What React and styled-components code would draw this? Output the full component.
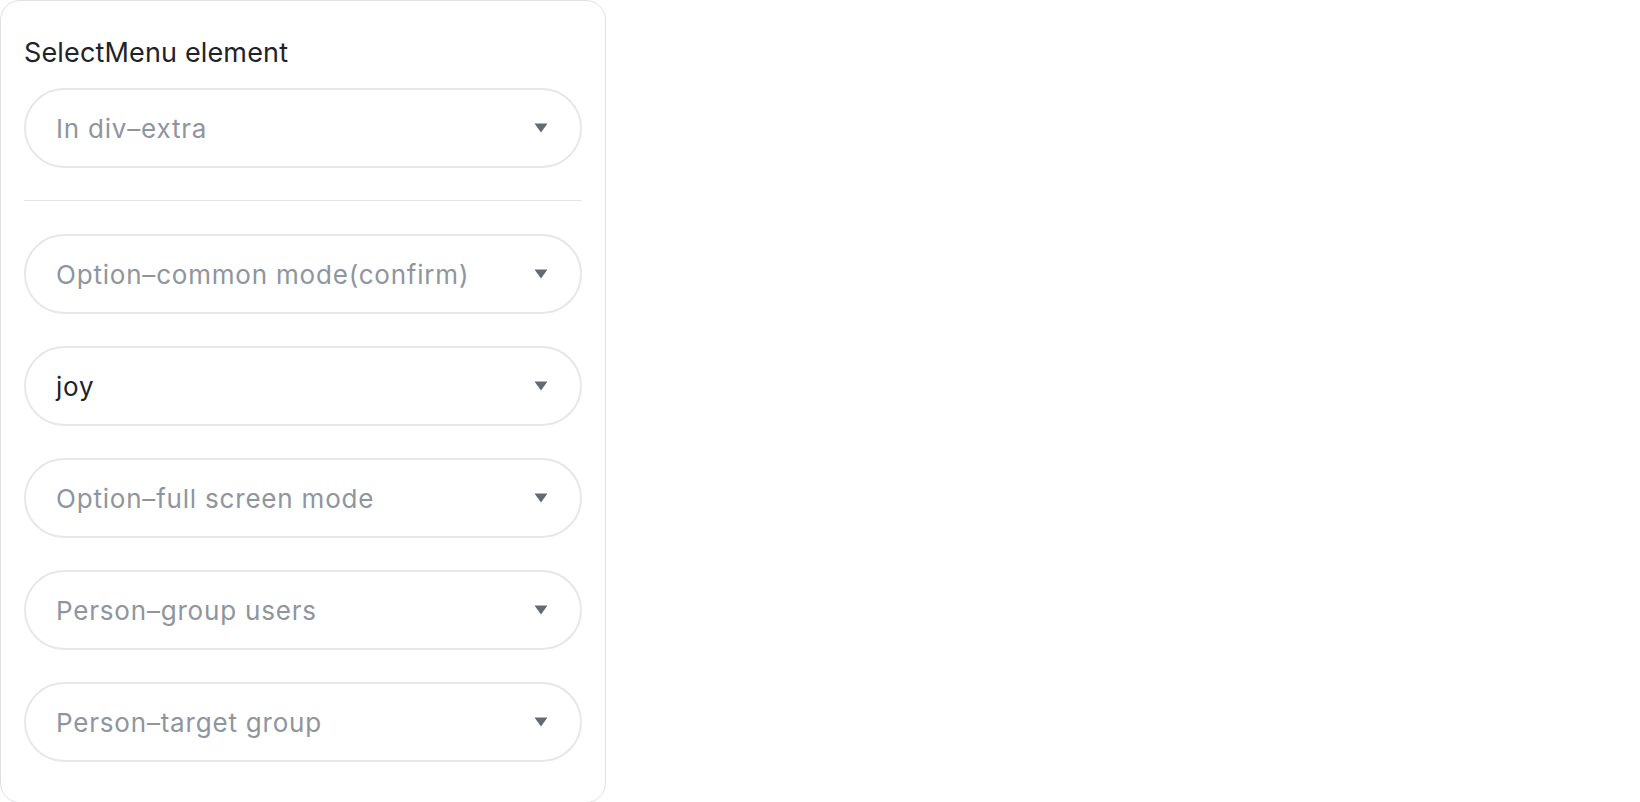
import React from 'react'
import styled, { createGlobalStyle } from 'styled-components';

const GlobalStyle = createGlobalStyle`
    body {
        margin: 0;
        background: #ffffff;
        font-family: Inter, "Noto Sans", "Noto Sans CJK SC", sans-serif;
    }
`;

const Card = styled.div`
    box-sizing: border-box;
    width: 606px;
    border: 1px solid #dee0e3;
    border-radius: 20px;
    padding: 34px 23px 40px;
    background: #fff;
`;
const Title = styled.div`
    font-size: 27px;
    line-height: 36px;
    letter-spacing: 0.15px;
    color: #1f2329;
    margin-bottom: 17px;
`;
const Divider = styled.div`
    height: 1px;
    background: #e4e5e7;
    margin: 32px 0 33px;
`;
const List = styled.div`
    display: flex;
    flex-direction: column;
    gap: 32px;
`;
const Select = styled.div`
    box-sizing: border-box;
    height: 80px;
    display: flex;
    align-items: center;
    justify-content: space-between;
    padding: 0 32px 0 30px;
    border: 2px solid #e6e7e9;
    border-radius: 40px;
    background: #fff;
`;
const Value = styled.span`
    font-size: 26px;
    letter-spacing: 0.8px;
    color: ${props => props.placeholder ? '#8f959e' : '#1f2329'};
    white-space: nowrap;
`;

const Arrow = () => (
    <svg width="14" height="10" viewBox="0 0 14 10">
        <path d="M0.5 0.5 L13.5 0.5 L7 9.5 Z" fill="#646a73" />
    </svg>
);

const SelectMenu = ({ text, placeholder }) => (
    <Select>
        <Value placeholder={placeholder}>{text}</Value>
        <Arrow />
    </Select>
);

const items = [
    { text: 'Option\u2013common mode(confirm)', placeholder: true },
    { text: 'joy', placeholder: false },
    { text: 'Option\u2013full screen mode', placeholder: true },
    { text: 'Person\u2013group users', placeholder: true },
    { text: 'Person\u2013target group', placeholder: true },
];

export default function App() {
    return (
        <>
            <GlobalStyle />
            <Card>
                <Title>SelectMenu element</Title>
                <SelectMenu text={'In div\u2013extra'} placeholder />
                <Divider />
                <List>
                    {items.map(item => (
                        <SelectMenu key={item.text} text={item.text} placeholder={item.placeholder} />
                    ))}
                </List>
            </Card>
        </>
    );
}
